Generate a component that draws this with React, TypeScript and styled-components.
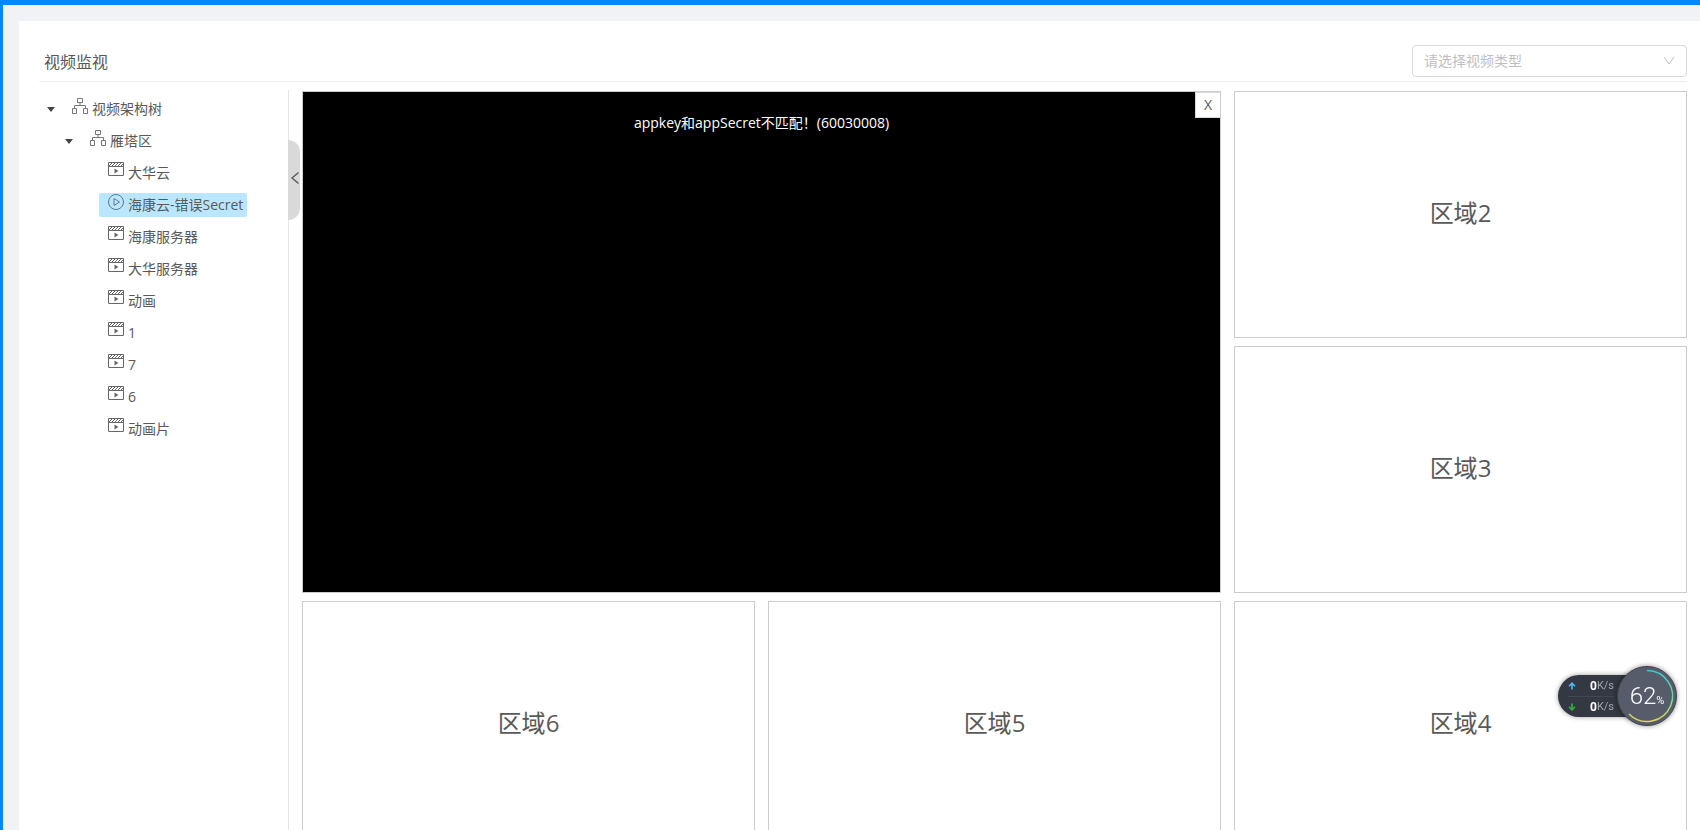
import React from 'react';
import styled, { createGlobalStyle } from 'styled-components';

const GlobalStyle = createGlobalStyle`
  *, *::before, *::after { box-sizing: border-box; }
  body {
    margin: 0;
    background: #fff;
    color: #595959;
    font: 14px/24px "Open Sans", "Noto Sans CJK SC", sans-serif;
  }
  button, select { font: inherit; color: inherit; }
`;

const Page = styled.div`
  display: flex;
  height: 100vh;
  overflow: hidden;
  padding: 16px 0 0 16px;
  border: solid #0089ff;
  border-width: 5px 0 0 3px;
  background: #f0f2f5;
`;

const Panel = styled.main`
  display: flex;
  flex-direction: column;
  flex: 1;
  min-width: 0;
  padding: 24px 13px 0 20px;
  background: #fff;
`;

const Header = styled.header`
  display: flex;
  justify-content: space-between;
  align-items: flex-start;
  height: 37px;
  border-bottom: 1px solid #f0f0f0;
`;

const Title = styled.h1`
  margin: 0;
  padding-left: 5px;
  font-size: 16px;
  font-weight: 400;
  line-height: 34px;
`;

const SelectBox = styled.label`
  display: flex;
  align-items: center;
  width: 275px;
  height: 32px;
  padding-right: 11px;
  border: 1px solid #d9d9d9;
  border-radius: 4px;
  color: #bfbfbf;
`;

const TypeSelect = styled.select`
  flex: 1;
  height: 30px;
  padding: 0 11px;
  border: 0;
  outline: 0;
  appearance: none;
  background: transparent;
`;

const Body = styled.div`
  display: flex;
  flex: 1;
  min-height: 0;
  padding-top: 8px;
`;

const Sidebar = styled.nav`
  position: relative;
  flex: none;
  width: 250px;
  padding-top: 3px;
  border-right: 1px solid #e4e4e4;
`;

const CollapseHandle = styled.button`
  position: absolute;
  top: 50px;
  left: 100%;
  display: grid;
  place-items: center end;
  width: 12px;
  height: 80px;
  padding: 0 1px 4px 0;
  border: 0;
  border-radius: 0 12px 12px 0;
  background: #d9d9d9;
`;

const TreeList = styled.ul`
  margin: 0;
  padding: 0;
  list-style: none;
`;

const TreeRow = styled.div<{ $level: number }>`
  display: flex;
  align-items: center;
  height: 32px;
  padding-left: ${(p) => p.$level * 18}px;
`;

const Toggle = styled.button`
  display: grid;
  place-items: center;
  width: 24px;
  height: 24px;
  padding: 0;
  border: 0;
  background: none;
`;

const Spacer = styled.span`
  width: 24px;
`;

const TreeNode = styled.button<{ $selected?: boolean }>`
  display: flex;
  gap: 4px;
  height: 24px;
  padding: 0 4px 0 9px;
  border: 0;
  border-radius: 2px;
  background: ${(p) => (p.$selected ? '#bae7ff' : 'none')};
  white-space: nowrap;
`;

const Regions = styled.section`
  display: grid;
  flex: 1;
  grid-template-columns: repeat(3, minmax(0, 1fr));
  grid-auto-rows: 247px;
  gap: 8px 13px;
  margin-left: 13px;
  padding-top: 1px;
`;

const Region = styled.div`
  display: grid;
  place-items: center;
  padding-bottom: 3px;
  border: 1px solid #ccc;
  font-size: 24px;
`;

const Player = styled.div`
  position: relative;
  grid-area: span 2 / span 2;
  padding-top: 19px;
  border: 1px solid #ccc;
  background: #000;
  color: #fff;
  text-align: center;
`;

const CloseButton = styled.button`
  position: absolute;
  top: 0;
  right: 0;
  width: 25px;
  height: 26px;
  padding: 0;
  border: 1px solid #d9d9d9;
  border-right: 0;
  background: #fff;
  color: #595959;
`;

const Monitor = styled.aside`
  position: fixed;
  right: 23px;
  bottom: 104px;
  display: flex;
  align-items: center;
  font-family: Roboto, sans-serif;
`;

const Speeds = styled.div`
  width: 83px;
  height: 42px;
  margin-right: -24px;
  padding: 0 27px 0 10px;
  border-radius: 21px 0 0 21px;
  background: #333842;
  box-shadow: 0 0 5px rgba(0, 0, 0, 0.4);
  color: #a4a8b0;
  font-size: 11px;
`;

const Speed = styled.div`
  display: flex;
  align-items: center;
  height: 21px;
  white-space: nowrap;

  & + & { border-top: 1px solid #424751; }
  svg { margin-right: auto; }
  b { color: #fff; font-size: 12px; }
`;

const Gauge = styled.div`
  position: relative;
  display: flex;
  justify-content: center;
  align-items: baseline;
  width: 60px;
  height: 60px;
  border: 1px solid #3f4450;
  border-radius: 50%;
  background: #565c69;
  box-shadow: 0 0 5px rgba(0, 0, 0, 0.45);
  color: #fff;
  font-size: 11px;
  line-height: 58px;

  svg { position: absolute; inset: -1px; }
`;

const GaugeValue = styled.span`
  font-size: 24px;
  font-weight: 300;
`;

const OrgIcon = () => (
  <svg width="16" height="20" viewBox="0 0 16 20" fill="none" stroke="#777" aria-hidden="true">
    <path d="M5.500 1.500h5v4h-5zM.5 11.500h4v5h-4zM11.500 11.500h4v5h-4zM8 5.500v3M2.500 11.500v-3h11v3" />
  </svg>
);

const VideoIcon = () => (
  <svg width="16" height="20" viewBox="0 0 16 20" fill="none" stroke="#666" aria-hidden="true">
    <path d="M.5 1.500h15v13H.5zM.5 5.500h15" />
    <path d="M1 5l3-3M4 5l3-3M7 5l3-3M10 5l3-3M13 5l2.500-2.500" />
    <path d="M6.500 7.500v5l4-2.500z" fill="#666" stroke="none" />
  </svg>
);

const PlayIcon = () => (
  <svg width="16" height="20" viewBox="0 0 16 20" fill="none" stroke="#5f7a88" aria-hidden="true">
    <circle cx="8" cy="9" r="7.500" />
    <path d="M6 5.500v7l5.500-3.500z" />
  </svg>
);

const Caret = () => (
  <svg width="8" height="5" viewBox="0 0 8 5" aria-hidden="true">
    <path d="M0 0h8L4 5z" fill="#444" />
  </svg>
);

const icons = { org: OrgIcon, video: VideoIcon, play: PlayIcon };

type Item = { label: string; level: number; icon: keyof typeof icons };

const items: Item[] = [
  { label: '视频架构树', level: 0, icon: 'org' },
  { label: '雁塔区', level: 1, icon: 'org' },
  { label: '大华云', level: 2, icon: 'video' },
  { label: '海康云-错误Secret', level: 2, icon: 'play' },
  { label: '海康服务器', level: 2, icon: 'video' },
  { label: '大华服务器', level: 2, icon: 'video' },
  { label: '动画', level: 2, icon: 'video' },
  { label: '1', level: 2, icon: 'video' },
  { label: '7', level: 2, icon: 'video' },
  { label: '6', level: 2, icon: 'video' },
  { label: '动画片', level: 2, icon: 'video' },
];

const TreeItem = ({ label, level, icon }: Item) => {
  const Icon = icons[icon];
  return (
    <li>
      <TreeRow $level={level}>
        {icon === 'org' ? (
          <Toggle type="button" aria-label={`收起${label}`}>
            <Caret />
          </Toggle>
        ) : (
          <Spacer />
        )}
        <TreeNode type="button" $selected={icon === 'play'}>
          <Icon />
          {label}
        </TreeNode>
      </TreeRow>
    </li>
  );
};

export default function App() {
  return (
    <>
      <GlobalStyle />
      <Page>
        <Panel>
          <Header>
            <Title>视频监视</Title>
            <SelectBox>
              <TypeSelect aria-label="视频类型" defaultValue="">
                <option value="">请选择视频类型</option>
              </TypeSelect>
              <svg width="12" height="12" viewBox="0 0 12 12" fill="none" stroke="#bfbfbf" aria-hidden="true">
                <path d="M1 2l5 7 5-7" />
              </svg>
            </SelectBox>
          </Header>
          <Body>
            <Sidebar>
              <TreeList>
                {items.map((item) => (
                  <TreeItem key={item.label} {...item} />
                ))}
              </TreeList>
              <CollapseHandle type="button" aria-label="收起侧栏">
                <svg width="8" height="12" viewBox="0 0 8 12" fill="none" stroke="#555" strokeWidth="1.300" aria-hidden="true">
                  <path d="M7.500 .5L1 6l6.500 5.500" />
                </svg>
              </CollapseHandle>
            </Sidebar>
            <Regions>
              <Player>
                appkey和appSecret不匹配！(60030008)
                <CloseButton type="button">X</CloseButton>
              </Player>
              {[2, 3, 6, 5, 4].map((n) => (
                <Region key={n}>区域{n}</Region>
              ))}
            </Regions>
          </Body>
        </Panel>
      </Page>
      <Monitor>
        <Speeds>
          <Speed>
            <svg width="8" height="8" viewBox="0 0 8 8" fill="none" stroke="#4db8f5" strokeWidth="1.600" aria-hidden="true">
              <path d="M4 7.500V1.500M1 4.200l3-3 3 3" />
            </svg>
            <b>0</b>K/s
          </Speed>
          <Speed>
            <svg width="8" height="8" viewBox="0 0 8 8" fill="none" stroke="#2fb53a" strokeWidth="1.600" aria-hidden="true">
              <path d="M4 .5v6M1 3.800l3 3 3-3" />
            </svg>
            <b>0</b>K/s
          </Speed>
        </Speeds>
        <Gauge>
          <GaugeValue>62</GaugeValue>%
          <svg width="60" height="60" viewBox="0 0 60 60" fill="none" aria-hidden="true">
            <defs>
              <linearGradient id="load" x1="0" y1="0" x2="0" y2="1">
                <stop offset="0" stopColor="#3cc8d2" />
                <stop offset=".55" stopColor="#6fdc9a" />
                <stop offset="1" stopColor="#e6d84e" />
              </linearGradient>
            </defs>
            <path d="M30 4.500A25.500 25.500 0 1 1 12 48" stroke="url(#load)" strokeWidth="1.500" />
          </svg>
        </Gauge>
      </Monitor>
    </>
  );
}
